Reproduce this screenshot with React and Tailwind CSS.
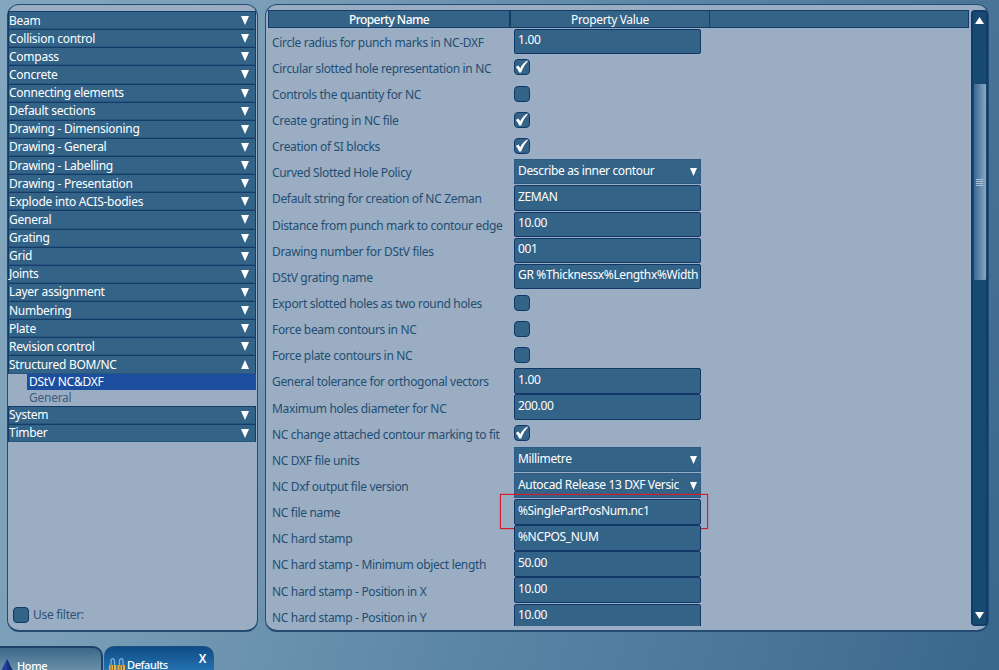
import clsx from "clsx";
import React, { useState } from "react";

const categories = [
	{ name: "Beam" },
	{ name: "Collision control" },
	{ name: "Compass" },
	{ name: "Concrete" },
	{ name: "Connecting elements" },
	{ name: "Default sections" },
	{ name: "Drawing - Dimensioning" },
	{ name: "Drawing - General" },
	{ name: "Drawing - Labelling" },
	{ name: "Drawing - Presentation" },
	{ name: "Explode into ACIS-bodies" },
	{ name: "General" },
	{ name: "Grating" },
	{ name: "Grid" },
	{ name: "Joints" },
	{ name: "Layer assignment" },
	{ name: "Numbering" },
	{ name: "Plate" },
	{ name: "Revision control" },
	{ name: "Structured BOM/NC", children: ["DStV NC&DXF", "General"] },
	{ name: "System" },
	{ name: "Timber" },
];

const properties = [
	{ name: "Circle radius for punch marks in NC-DXF", type: "text", value: "1.00" },
	{ name: "Circular slotted hole representation in NC", type: "check", value: true },
	{ name: "Controls the quantity for NC", type: "check", value: false },
	{ name: "Create grating in NC file", type: "check", value: true },
	{ name: "Creation of SI blocks", type: "check", value: true },
	{ name: "Curved Slotted Hole Policy", type: "select", value: "Describe as inner contour" },
	{ name: "Default string for creation of NC Zeman", type: "text", value: "ZEMAN" },
	{ name: "Distance from punch mark to contour edge", type: "text", value: "10.00" },
	{ name: "Drawing number for DStV files", type: "text", value: "001" },
	{ name: "DStV grating name", type: "text", value: "GR %Thicknessx%Lengthx%Width" },
	{ name: "Export slotted holes as two round holes", type: "check", value: false },
	{ name: "Force beam contours in NC", type: "check", value: false },
	{ name: "Force plate contours in NC", type: "check", value: false },
	{ name: "General tolerance for orthogonal vectors", type: "text", value: "1.00" },
	{ name: "Maximum holes diameter for NC", type: "text", value: "200.00" },
	{ name: "NC change attached contour marking to fit", type: "check", value: true },
	{ name: "NC DXF file units", type: "select", value: "Millimetre" },
	{ name: "NC Dxf output file version", type: "select", value: "Autocad Release 13 DXF Versic" },
	{ name: "NC file name", type: "text", value: "%SinglePartPosNum.nc1", marked: true },
	{ name: "NC hard stamp", type: "text", value: "%NCPOS_NUM" },
	{ name: "NC hard stamp - Minimum object length", type: "text", value: "50.00" },
	{ name: "NC hard stamp - Position in X", type: "text", value: "10.00" },
	{ name: "NC hard stamp - Position in Y", type: "text", value: "10.00" },
];

const Arrow = ({ up, className }) => (
	<svg viewBox="0 0 8 8" preserveAspectRatio="none" className={clsx("shrink-0 fill-white", className)}>
		<path d={up ? "M4 0L8 8H0z" : "M0 0H8L4 8z"} />
	</svg>
);

const CheckBox = ({ checked, onClick }) => (
	<button
		onClick={onClick}
		className="flex size-4 shrink-0 items-center justify-center rounded-[4px] border border-[#12386a] bg-[#346388]">
		{checked && (
			<svg viewBox="0 0 14 14" className="size-[14px] shrink-0 fill-white">
				<path d="M0.8 7L3.4 5.6L5.2 8.2C6.8 5.2 8.8 2.8 12.2 0.6L12.8 1.2C10 4.2 7.8 8 6.2 12.6H4.2C3.4 10.5 2.3 8.6 0.8 7z" />
			</svg>
		)}
	</button>
);

const PropertyField = ({ item, onToggle }) => {
	if (item.type === "check") {
		return <CheckBox checked={item.value} onClick={onToggle} />;
	}
	if (item.type === "select") {
		return (
			<div className="flex h-[25px] w-[187px] items-center justify-between border border-[#2a5a85] bg-[#346388] pr-[3px] pb-px pl-[3px]">
				<span className="whitespace-nowrap">{item.value}</span>
				<Arrow className="mt-0.5 h-[8px] w-[7px]" />
			</div>
		);
	}
	return (
		<div className="flex h-[25.5px] w-[187px] items-center rounded-[2px] border border-[#12386a] bg-[#346388] pb-[2.5px] pl-[3px]">
			<span className="whitespace-nowrap">{item.value}</span>
		</div>
	);
};

const Sidebar = () => {
	const [open, setOpen] = useState("Structured BOM/NC");
	const [useFilter, setUseFilter] = useState(false);
	return (
		<div className="flex h-[628px] w-[251px] flex-col rounded-[12px] border border-b-2 border-[#234b74] bg-[#9aadc2] pt-1.5">
			<div className="w-[248px] text-[12px] tracking-[-0.26px] text-white">
				{categories.map((cat) => (
					<div key={cat.name}>
						<div
							onClick={() => setOpen(open === cat.name ? null : cat.name)}
							className="flex h-[18.13px] items-center justify-between border border-[#153b69] border-b-[#28557f] bg-[#346388] pt-px pr-1.5 leading-none">
							<span className="whitespace-nowrap">{cat.name}</span>
							<Arrow up={open === cat.name} className="h-[9px] w-[8px]" />
						</div>
						{open === cat.name &&
							cat.children?.map((child, i) => (
								<div
									key={child}
									className={clsx(
										"ml-[19px] flex h-4 items-center pl-0.5",
										i === 0 ? "bg-[#1c4e9f]" : "text-[#3c5c80]",
									)}>
									{child}
								</div>
							))}
					</div>
				))}
			</div>
			<div className="mt-auto mb-[6px] ml-[5px] flex items-center gap-1 text-[12px] tracking-[-0.3px] text-[#2b5478]">
				<CheckBox checked={useFilter} onClick={() => setUseFilter(!useFilter)} />
				<span>Use filter:</span>
			</div>
		</div>
	);
};

const ScrollBar = () => (
	<div className="flex h-[616px] w-[17px] shrink-0 flex-col items-center rounded-[4px] border-2 border-[#123a6b] bg-[#174a70]">
		<Arrow up className="mt-[5px] h-[7px] w-[9px]" />
		<div className="mt-[59px] flex h-[198px] w-[14px] shrink-0 flex-col items-center justify-center gap-px rounded-[2px] border border-[#174a70] bg-linear-to-r from-[#376a94] to-[#8ba6c0]">
			<div className="h-px w-[7px] bg-[#a9c0d3]"></div>
			<div className="h-px w-[7px] bg-[#a9c0d3]"></div>
			<div className="h-px w-[7px] bg-[#a9c0d3]"></div>
			<div className="h-px w-[7px] bg-[#a9c0d3]"></div>
		</div>
		<Arrow className="mt-auto mb-[5px] h-[7px] w-[9px]" />
	</div>
);

const PropertyGrid = () => {
	const [items, setItems] = useState(properties);
	const toggle = (index) => {
		setItems(items.map((p, i) => (i === index ? { ...p, value: !p.value } : p)));
	};
	return (
		<div className="flex h-[628px] w-[724px] justify-between rounded-[12px] border border-b-2 border-[#234b74] bg-[#9aadc2] pt-[5px] pl-0.5">
			<div className="w-[701px]">
				<div className="flex h-[18px] border border-[#153b69] bg-[#346388] text-[12px] leading-[17px] font-medium tracking-[-0.55px] text-white">
					<div className="w-[242px] border-r-2 border-[#153b69] text-center">Property Name</div>
					<div className="w-[199px] border-r border-[#153b69] text-center font-normal tracking-[-0.35px]">
						Property Value
					</div>
				</div>
				<div className="h-[598px] overflow-hidden">
					{items.map((item, i) => (
						<div key={item.name} className="flex h-[26.15px] items-center">
							<div className="w-[246px] shrink-0 pt-[3px] pl-1 text-[12px] tracking-[-0.33px] whitespace-nowrap text-[#234d73]">
								{item.name}
							</div>
							<div className="relative flex items-center pt-[0.4px] text-[12px] tracking-[-0.35px] text-white">
								<PropertyField item={item} onToggle={() => toggle(i)} />
								{item.marked && (
									<div className="absolute -top-[5px] -left-[14px] h-[35px] w-[208px] border border-[#cf1f2f] shadow-[0_0_1px_#c8202f]"></div>
								)}
							</div>
						</div>
					))}
				</div>
			</div>
			<ScrollBar />
		</div>
	);
};

const TabBar = () => (
	<div className="mt-[14px] flex h-6 gap-px text-[11px] font-medium tracking-[-0.4px] text-white">
		<div className="flex h-9 w-[103px] shrink-0 items-center rounded-tr-[10px] border-t-2 border-r-2 border-[#1d4268] bg-linear-to-b from-[#3b698a] to-[#84a5b8] pt-0.5">
			<svg viewBox="0 0 14 14" className="size-[14px] shrink-0">
				<path d="M7 0L14 14H0z" fill="#263f9c" />
				<path d="M7 0L14 14H7z" fill="#16307f" />
			</svg>
			<span className="ml-[3px]">Home</span>
		</div>
		<div className="flex h-9 w-[110px] shrink-0 rounded-t-[10px] border-t border-[#1b4d80] bg-linear-to-b from-[#0f4c86] to-[#2f86c6] pl-[5px]">
			<svg viewBox="0 0 16 14" className="mt-[11px] h-[14px] w-4 shrink-0">
				<path d="M2 8V3a1.5 2 0 0 1 3.5 0V8M10.5 8V3a1.5 2 0 0 1 3.5 0V8" fill="none" stroke="#78b4df" strokeWidth="1.3" />
				<path d="M0 7H7.3V14H0zM8.5 7H16V14H8.5z" fill="#e3b044" />
				<path d="M2 7V14M4.5 7V14M11 7V14M13.5 7V14" stroke="#7d6235" />
			</svg>
			<span className="mt-[10px] ml-[2px]">Defaults</span>
			<span className="mt-[3px] mr-2 ml-auto text-[12px] font-semibold">X</span>
		</div>
	</div>
);

const App = () => (
	<div className="h-[670px] w-[999px] overflow-hidden bg-[linear-gradient(108deg,#84a7bf_0%,#7a9eb7_22%,#5c86a6_55%,#4a7597_80%,#38678c_100%)] pt-1 font-['Noto_Sans','Open_Sans',sans-serif]">
		<div className="flex gap-[7px] pl-[7px]">
			<Sidebar />
			<PropertyGrid />
		</div>
		<TabBar />
	</div>
);

export default App;
